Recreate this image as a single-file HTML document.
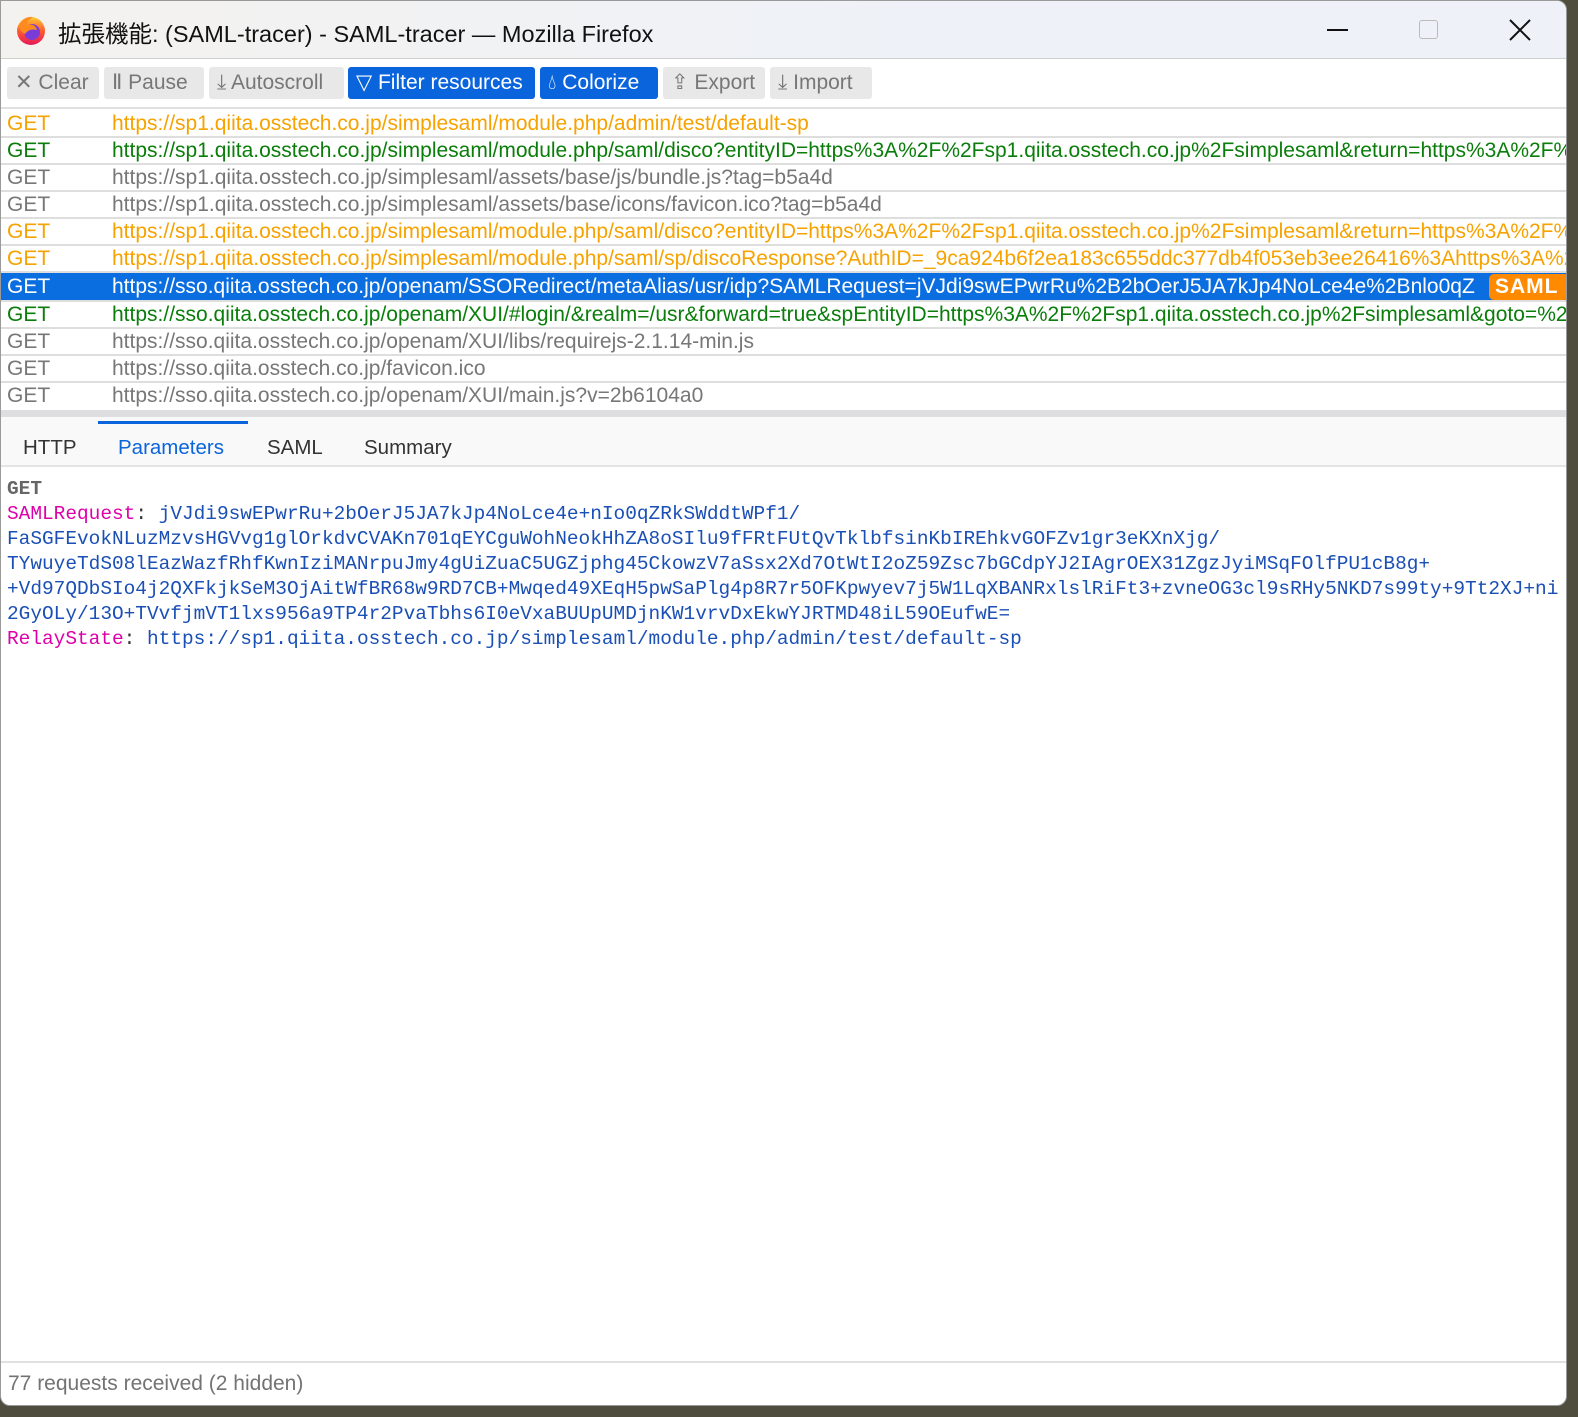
<!DOCTYPE html>
<html><head><meta charset="utf-8"><style>
*{margin:0;padding:0;box-sizing:border-box}
body{width:1578px;height:1417px;background:#4f4d3e;position:relative;overflow:hidden;font-family:"Liberation Sans",Arial,sans-serif}
#win{position:absolute;left:0;top:0;width:1567px;height:1406px;background:#fff;border:1px solid #9a9a9a;border-radius:0 10px 10px 10px;overflow:hidden}
#title{height:58px;background:linear-gradient(90deg,#f4f2ef,#eef2f8 60%,#eef2f8);border-bottom:1px solid #d0d0d0;position:relative}
#title .t{position:absolute;left:57px;top:14px;font-size:23.5px;color:#111;font-family:"Liberation Sans","Noto Sans CJK JP",sans-serif}
#tb{height:48px;border-bottom:2px solid #e0e0e0;position:relative}
.b{position:absolute;top:7px;height:32px;background:#e8e8e8;border-radius:3px;color:#777;font-size:21px;line-height:32px;padding-left:8px;white-space:nowrap}
.b.on{background:#0a64dc;color:#fff}
.row{height:27px;border-bottom:2px solid #dedede;font-size:21px;line-height:25px;white-space:nowrap;position:relative;overflow:hidden}
.row .m{position:absolute;left:6px}
.row .u{position:absolute;left:111px}
.o{color:#f6a200}.g{color:#0a7d0a}.y{color:#777}
.sel{background:#0a6ee0;color:#fff;height:29px;line-height:27px}
#sep{height:7px;background:#dedee0}
#tabs{height:50px;background:#f9f9fa;border-bottom:2px solid #e4e4e4;position:relative;font-size:20.5px;color:#333}
#tabs span{position:absolute;top:19px}
#content{font-family:"Liberation Mono",monospace;font-size:19.45px;line-height:25px;color:#1a4fb5;padding:10px 6px;white-space:nowrap}
.k{color:#dd00a9}
#status{position:absolute;left:0;top:1360px;width:100%;border-top:2px solid #e0e0e0;font-size:21px;color:#737373;padding:9px 7px}
</style></head><body>
<div id="win">
<div id="title">
<svg style="position:absolute;left:14px;top:13px" width="32" height="32" viewBox="0 0 32 32"><defs><linearGradient id="f" x1="0" y1="0" x2="0" y2="1"><stop offset="0" stop-color="#ffcc33"/><stop offset=".5" stop-color="#ff5a2d"/><stop offset="1" stop-color="#e3185c"/></linearGradient></defs><circle cx="16" cy="17" r="14" fill="url(#f)"/><circle cx="17" cy="18" r="8" fill="#7a3cd8"/><path d="M4 12 Q8 2 18 3 Q12 6 12 11 Q20 9 22 16 Q14 14 10 20 Q5 18 4 12Z" fill="#ff8a1e"/></svg>
<div class="t">拡張機能: (SAML-tracer) - SAML-tracer — Mozilla Firefox</div>
<div style="position:absolute;left:1326px;top:28px;width:21px;height:2px;background:#111"></div>
<div style="position:absolute;left:1418px;top:19px;width:19px;height:19px;border:1.5px solid #bbb;border-radius:3px"></div>
<svg style="position:absolute;left:1508px;top:18px" width="22" height="22"><path d="M1 1L21 21M21 1L1 21" stroke="#111" stroke-width="2"/></svg>
</div>
<div id="tb" style="height:50px">
<div class="b" style="left:6px;width:92px;top:8px">✕ Clear</div>
<div class="b" style="left:103px;width:100px;top:8px">Ⅱ Pause</div>
<div class="b" style="left:208px;width:135px;top:8px">⤓ Autoscroll</div>
<div class="b on" style="left:347px;width:187px;top:8px">▽ Filter resources</div>
<div class="b on" style="left:539px;width:118px;top:8px">💧︎ Colorize</div>
<div class="b" style="left:662px;width:102px;top:8px">⇪ Export</div>
<div class="b" style="left:769px;width:102px;top:8px">⤓ Import</div>
</div>
<div style="height:2px"></div>
<div class="row o"><span class="m">GET</span><span class="u">https://sp1.qiita.osstech.co.jp/simplesaml/module.php/admin/test/default-sp</span></div>
<div class="row g"><span class="m">GET</span><span class="u">https://sp1.qiita.osstech.co.jp/simplesaml/module.php/saml/disco?entityID=https%3A%2F%2Fsp1.qiita.osstech.co.jp%2Fsimplesaml&amp;return=https%3A%2F%2F</span></div>
<div class="row y"><span class="m">GET</span><span class="u">https://sp1.qiita.osstech.co.jp/simplesaml/assets/base/js/bundle.js?tag=b5a4d</span></div>
<div class="row y"><span class="m">GET</span><span class="u">https://sp1.qiita.osstech.co.jp/simplesaml/assets/base/icons/favicon.ico?tag=b5a4d</span></div>
<div class="row o"><span class="m">GET</span><span class="u">https://sp1.qiita.osstech.co.jp/simplesaml/module.php/saml/disco?entityID=https%3A%2F%2Fsp1.qiita.osstech.co.jp%2Fsimplesaml&amp;return=https%3A%2F%2F</span></div>
<div class="row o"><span class="m">GET</span><span class="u">https://sp1.qiita.osstech.co.jp/simplesaml/module.php/saml/sp/discoResponse?AuthID=_9ca924b6f2ea183c655ddc377db4f053eb3ee26416%3Ahttps%3A%2F</span></div>
<div class="row sel"><span class="m">GET</span><span class="u">https://sso.qiita.osstech.co.jp/openam/SSORedirect/metaAlias/usr/idp?SAMLRequest=jVJdi9swEPwrRu%2B2bOerJ5JA7kJp4NoLce4e%2Bnlo0qZ</span><span style="position:absolute;left:1488px;top:1px;width:80px;height:26px;background:#ff8a00;border-radius:5px;color:#fff;font-weight:bold;font-size:21px;line-height:26px;padding-left:6px;letter-spacing:1px">SAML</span></div>
<div class="row g"><span class="m">GET</span><span class="u">https://sso.qiita.osstech.co.jp/openam/XUI/#login/&amp;realm=/usr&amp;forward=true&amp;spEntityID=https%3A%2F%2Fsp1.qiita.osstech.co.jp%2Fsimplesaml&amp;goto=%2</span></div>
<div class="row y"><span class="m">GET</span><span class="u">https://sso.qiita.osstech.co.jp/openam/XUI/libs/requirejs-2.1.14-min.js</span></div>
<div class="row y"><span class="m">GET</span><span class="u">https://sso.qiita.osstech.co.jp/favicon.ico</span></div>
<div class="row y" style="border-bottom:0"><span class="m">GET</span><span class="u">https://sso.qiita.osstech.co.jp/openam/XUI/main.js?v=2b6104a0</span></div>
<div id="sep"></div>
<div id="tabs">
<div style="position:absolute;left:97px;top:4px;width:150px;height:3px;background:#0a64dc"></div>
<span style="left:22px">HTTP</span><span style="left:117px;color:#0a64dc">Parameters</span><span style="left:266px">SAML</span><span style="left:363px">Summary</span>
</div>
<div id="content">
<div style="color:#666;font-weight:bold">GET</div>
<div><span class="k">SAMLRequest</span><span style="color:#333">:</span> jVJdi9swEPwrRu+2bOerJ5JA7kJp4NoLce4e+nIo0qZRkSWddtWPf1/</div>
<div>FaSGFEvokNLuzMzvsHGVvg1glOrkdvCVAKn701qEYCguWohNeokHhZA8oSIlu9fFRtFUtQvTklbfsinKbIREhkvGOFZv1gr3eKXnXjg/</div>
<div>TYwuyeTdS08lEazWazfRhfKwnIziMANrpuJmy4gUiZuaC5UGZjphg45CkowzV7aSsx2Xd7OtWtI2oZ59Zsc7bGCdpYJ2IAgrOEX31ZgzJyiMSqFOlfPU1cB8g+</div>
<div>+Vd97QDbSIo4j2QXFkjkSeM3OjAitWfBR68w9RD7CB+Mwqed49XEqH5pwSaPlg4p8R7r5OFKpwyev7j5W1LqXBANRxlslRiFt3+zvneOG3cl9sRHy5NKD7s99ty+9Tt2XJ+ni</div>
<div>2GyOLy/13O+TVvfjmVT1lxs956a9TP4r2PvaTbhs6I0eVxaBUUpUMDjnKW1vrvDxEkwYJRTMD48iL59OEufwE=</div>
<div><span class="k">RelayState</span><span style="color:#333">:</span> https://sp1.qiita.osstech.co.jp/simplesaml/module.php/admin/test/default-sp</div>
</div>
<div id="status">77 requests received (2 hidden)</div>
</div>
</body></html>
